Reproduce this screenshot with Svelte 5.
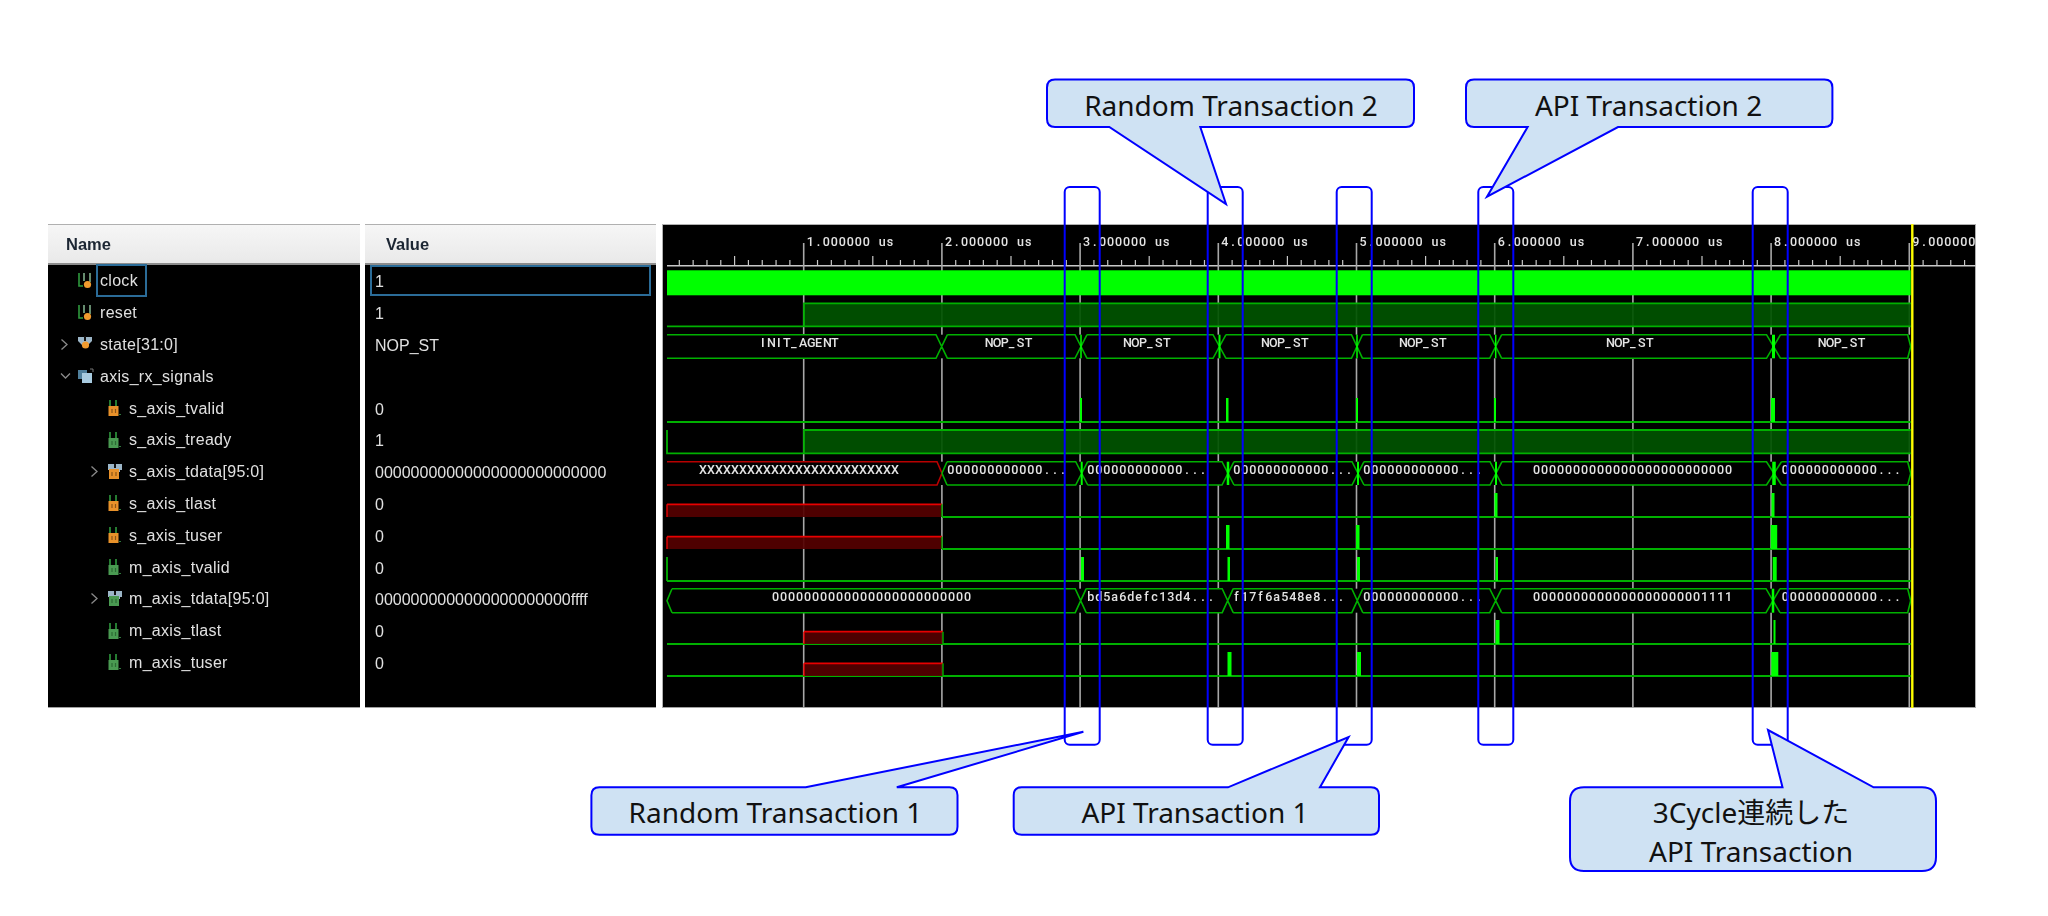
<script>
    // signal tree, top to bottom
    const rows = [
        { name: "clock", value: "1", icon: "wire", sel: true },
        { name: "reset", value: "1", icon: "wire" },
        { name: "state[31:0]", value: "NOP_ST", icon: "bus", open: ">" },
        { name: "axis_rx_signals", value: "", icon: "group", open: "v" },
        { name: "s_axis_tvalid", value: "0", icon: "in", sub: true },
        { name: "s_axis_tready", value: "1", icon: "out", sub: true },
        { name: "s_axis_tdata[95:0]", value: "00000000000000000000000000", icon: "busin", open: ">", sub: true },
        { name: "s_axis_tlast", value: "0", icon: "in", sub: true },
        { name: "s_axis_tuser", value: "0", icon: "in", sub: true },
        { name: "m_axis_tvalid", value: "0", icon: "out", sub: true },
        { name: "m_axis_tdata[95:0]", value: "0000000000000000000000ffff", icon: "busout", open: ">", sub: true },
        { name: "m_axis_tlast", value: "0", icon: "out", sub: true },
        { name: "m_axis_tuser", value: "0", icon: "out", sub: true }
    ];

    const X0 = 665.5;
    const US = 138.2;
    const END = 1910.7;

    const majors = [];
    for (let i = 1; i <= 9; i++) majors.push(X0 + i * US);

    const ticks = [];
    for (let i = 1; i < 95; i++) {
        if (i % 10 !== 0) ticks.push({ x: X0 + i * US / 10, top: i % 5 === 0 ? 256 : 260 });
    }

    const stateX = [
        { c: 941.7, hw: 5.7, t: 0 }, { c: 1081, hw: 6, t: 1.5 }, { c: 1219.5, hw: 6.5, t: 2 },
        { c: 1357, hw: 5.5, t: 1.5 }, { c: 1495.7, hw: 6, t: 1.5 }, { c: 1773.5, hw: 7, t: 3 }
    ];
    const sdataX = [
        { c: 942, hw: 5, t: 0 }, { c: 1081.7, hw: 6, t: 2 }, { c: 1228, hw: 6, t: 2.5 },
        { c: 1358, hw: 6, t: 2 }, { c: 1496, hw: 6, t: 2 }, { c: 1774, hw: 7.5, t: 3.5 }
    ];
    const mdataX = [
        { c: 1080.7, hw: 5.5, t: 0 }, { c: 1227.7, hw: 5.5, t: 0 }, { c: 1357.3, hw: 5.5, t: 0 },
        { c: 1495.7, hw: 6, t: 0 }, { c: 1773, hw: 7, t: 2.5 }
    ];

    function busPath(top, bot, cross, start, pointed) {
        const mid = (top + bot) / 2;
        let d = "";
        let left = start;
        if (pointed) {
            d += `M${start + 5} ${top}L${start} ${mid}L${start + 5} ${bot}`;
            left = start + 5;
        }
        for (const k of cross) {
            d += `M${left} ${top}H${k.c - k.hw}L${k.c + k.hw} ${bot}M${left} ${bot}H${k.c - k.hw}L${k.c + k.hw} ${top}`;
            left = k.c + k.hw;
        }
        d += `M${left} ${top}H${END - 3}L${END} ${mid}L${END - 3} ${bot}H${left}`;
        return d;
    }

    const buses = [
        { top: 334.7, bot: 358.3, cross: stateX, start: 667, pointed: false },
        { top: 461.7, bot: 485, cross: sdataX.slice(1), start: 947, pointed: false },
        { top: 588.7, bot: 612.7, cross: mdataX, start: 667, pointed: true }
    ];

    const labels = [
        { x: 799, y: 346.5, s: "INIT_AGENT", mid: true },
        { x: 1008.7, y: 346.5, s: "NOP_ST", mid: true },
        { x: 1147, y: 346.5, s: "NOP_ST", mid: true },
        { x: 1285, y: 346.5, s: "NOP_ST", mid: true },
        { x: 1423, y: 346.5, s: "NOP_ST", mid: true },
        { x: 1630, y: 346.5, s: "NOP_ST", mid: true },
        { x: 1841.7, y: 346.5, s: "NOP_ST", mid: true },
        { x: 799, y: 473.5, s: "XXXXXXXXXXXXXXXXXXXXXXXXX", mid: true },
        { x: 947.3, y: 473.5, s: "000000000000..." },
        { x: 1087.3, y: 473.5, s: "000000000000..." },
        { x: 1233.3, y: 473.5, s: "000000000000..." },
        { x: 1363.3, y: 473.5, s: "000000000000..." },
        { x: 1533, y: 473.5, s: "0000000000000000000000000" },
        { x: 1781.7, y: 473.5, s: "000000000000..." },
        { x: 872, y: 600.5, s: "0000000000000000000000000", mid: true },
        { x: 1087.3, y: 600.5, s: "bd5a6defc13d4..." },
        { x: 1233.3, y: 600.5, s: "f17f6a548e8..." },
        { x: 1363.3, y: 600.5, s: "000000000000..." },
        { x: 1533, y: 600.5, s: "0000000000000000000001111" },
        { x: 1781.7, y: 600.5, s: "000000000000..." }
    ];

    // the simulator font is a fixed 8px grid
    const nudge = { ".": 2, I: 2, f: 1, t: 1 };
    function gridX(x, s, mid) {
        const start = mid ? x - s.length * 4 : x;
        return [...s].map((ch, i) => start + i * 8 + (nudge[ch] || 0)).join(" ");
    }

    // single bit rows: low line, high level, pulses [x, width]
    const bits = [
        { low: 422, high: 398, from: 667, pulses: [[1080, 2], [1226, 2.5], [1356, 2], [1494, 2], [1771, 4]] },
        { low: 517, high: 493, from: 942, pulses: [[1494.5, 3], [1771.5, 3]] },
        { low: 549, high: 525, from: 942, pulses: [[1226, 3.5], [1356, 3.5], [1770.7, 6.5]] },
        { low: 581, high: 557, from: 667, pulses: [[1081, 3], [1227.5, 2.5], [1357, 3], [1495.5, 2.5], [1772.7, 4]] },
        { low: 644, high: 620, from: 667, pulses: [[1495.5, 4], [1773.5, 2]] },
        { low: 676, high: 652, from: 667, pulses: [[1227.5, 4], [1357, 4], [1771.3, 7]] }
    ];

    const redBars = [
        { x: 667, w: 275, top: 504.3, bot: 517 },
        { x: 667, w: 275, top: 536.7, bot: 549 },
        { x: 804, w: 139, top: 631.7, bot: 644 },
        { x: 804, w: 139, top: 663.3, bot: 676 }
    ];

    const marks = [1064.7, 1207.7, 1336.7, 1478.3, 1752.7];

    const callouts = [
        { d: "M1055 79.5H1406Q1414 79.5 1414 87.5V119Q1414 127 1406 127H1200.3L1226 204L1109.3 127H1055Q1047 127 1047 119V87.5Q1047 79.5 1055 79.5Z", lines: [{ x: 1231, y: 115.5, s: "Random Transaction 2" }] },
        { d: "M1474 79.5H1824.4Q1832.4 79.5 1832.4 87.5V119Q1832.4 127 1824.4 127H1618L1487 196.7L1527.6 127H1474Q1466 127 1466 119V87.5Q1466 79.5 1474 79.5Z", lines: [{ x: 1648.6, y: 115.5, s: "API Transaction 2" }] },
        { d: "M599.4 787.3H805.7L1083.4 731.7L896.8 787.3H949.5Q957.5 787.3 957.5 795.3V826.7Q957.5 834.7 949.5 834.7H599.4Q591.4 834.7 591.4 826.7V795.3Q591.4 787.3 599.4 787.3Z", lines: [{ x: 775.4, y: 823, s: "Random Transaction 1" }] },
        { d: "M1021.7 787.3H1228L1348.6 737L1320 787.3H1371Q1379 787.3 1379 795.3V826.7Q1379 834.7 1371 834.7H1021.7Q1013.7 834.7 1013.7 826.7V795.3Q1013.7 787.3 1021.7 787.3Z", lines: [{ x: 1195, y: 823, s: "API Transaction 1" }] },
        { d: "M1584 787.3H1782.5L1768 730L1873.6 787.3H1922Q1936 787.3 1936 801.3V857Q1936 871 1922 871H1584Q1570 871 1570 857V801.3Q1570 787.3 1584 787.3Z", lines: [{ x: 1751, y: 823, s: "3Cycle連続した" }, { x: 1751, y: 861.5, s: "API Transaction" }] }
    ];
</script>

<div class="page">
    <div class="panel names">
        <div class="head">Name</div>
        {#each rows as r}
            <div class="row" class:sub={r.sub}>
                <span class="twist">
                    {#if r.open === ">"}
                        <svg width="9" height="13" viewBox="0 0 9 13"><path d="M1.5 1.5L7 6.5L1.5 11.5" fill="none" stroke="#8a8a8a" stroke-width="1.3"/></svg>
                    {:else if r.open === "v"}
                        <svg width="11" height="8" viewBox="0 0 11 8"><path d="M1 1.5L5.5 6L10 1.5" fill="none" stroke="#8a8a8a" stroke-width="1.3"/></svg>
                    {/if}
                </span>
                <svg class="icon" width="17" height="18" viewBox="0 0 17 18">
                    {#if r.icon === "wire"}
                        <path d="M2 1V14H6" fill="none" stroke="#2f9a3e" stroke-width="1.6"/>
                        <path d="M7 1V9M13 1V10" fill="none" stroke="#7fae8a" stroke-width="1.6"/>
                        <circle cx="10.5" cy="12.5" r="3.6" fill="#f09a2e"/>
                    {:else if r.icon === "in" || r.icon === "out"}
                        <path d="M3 1V7M9 1V7" fill="none" stroke="#2f9a3e" stroke-width="1.6"/>
                        <rect x="1.5" y="7" width="10" height="10" fill={r.icon === "in" ? "#e8912a" : "#4a9a52"}/>
                        <path d="M5 10V14M8.5 10V14" stroke={r.icon === "in" ? "#8a5518" : "#2c6a34"} stroke-width="1.2"/>
                        <path d="M12 15.5H14" stroke="#2f7a3e" stroke-width="1.2"/>
                    {:else if r.icon === "bus"}
                        <path d="M1 2H15V6L11 10H5L1 6Z" fill="#9cb6c8"/>
                        <path d="M8 1V6" stroke="#111" stroke-width="2"/>
                        <circle cx="8.5" cy="10" r="3.6" fill="#f09a2e"/>
                    {:else if r.icon === "busin" || r.icon === "busout"}
                        <path d="M1 1H15V7H13V9H3V7H1Z" fill="#9cb6c8"/>
                        <path d="M8 1V5" stroke="#111" stroke-width="2"/>
                        <rect x="2" y="6" width="10" height="10" fill={r.icon === "busin" ? "#e8912a" : "#4a9a52"}/>
                        <path d="M5 9V13M9 9V13" stroke={r.icon === "busin" ? "#8a5518" : "#2c6a34"} stroke-width="1.2"/>
                    {:else}
                        <rect x="1" y="3" width="9" height="9" fill="#4f7f9c"/>
                        <rect x="5" y="6" width="10" height="10" fill="#a8cbe0"/>
                        <path d="M13 2H16M16 2V5" stroke="#777" stroke-width="1"/>
                    {/if}
                </svg>
                <span class="label" class:sel={r.sel}>{r.name}</span>
            </div>
        {/each}
    </div>

    <div class="panel values">
        <div class="head">Value</div>
        {#each rows as r}
            <div class="row val">
                <span class="valbox" class:sel={r.sel}>{r.value}</span>
            </div>
        {/each}
    </div>

    <div class="panel wave">
        <svg class="plot" width="1314" height="484" viewBox="662 224 1314 484">
            {#each ticks as t}
                <line x1={t.x} x2={t.x} y1={t.top} y2="265" stroke="#c8c8c8" stroke-width="1.2"/>
            {/each}
            <line x1="667" x2="1976" y1="265.7" y2="265.7" stroke="#c8c8c8" stroke-width="1.6"/>
            {#each majors as x}
                <line x1={x} x2={x} y1="243" y2="708" stroke="#a8a8a8" stroke-width="1.6"/>
            {/each}
            {#each majors as x, i}
                <text class="ruler" x={gridX(x + 3, `${i + 1}.000000${i === 8 ? "" : " us"}`)} y="245.5">{i + 1}.000000{i === 8 ? "" : " us"}</text>
            {/each}

            <rect x="667" y="270.3" width={END - 667} height="25" fill="#00ff00"/>

            <!-- reset and tready are high for most of the run -->
            <rect x="804" y="303.3" width={END - 804} height="23" fill="#005400" fill-opacity="0.92"/>
            <path d={`M667 326.3H804V303.3H${END}M804 326.3H${END}`} fill="none" stroke="#00b000" stroke-width="1.8"/>
            <rect x="804" y="430" width={END - 804} height="23.3" fill="#005400" fill-opacity="0.92"/>
            <path d={`M667 430V453.3H804V430H${END}M804 453.3H${END}`} fill="none" stroke="#00b000" stroke-width="1.8"/>

            {#each bits as b}
                <line x1={b.from} x2={END} y1={b.low} y2={b.low} stroke="#00b000" stroke-width="1.8"/>
                {#each b.pulses as p}
                    <rect x={p[0]} y={b.high} width={p[1]} height={b.low - b.high} fill="#00ff00"/>
                {/each}
            {/each}
            <path d="M667 557V581" stroke="#00b000" stroke-width="1.8"/>

            {#each redBars as r}
                <rect x={r.x} y={r.top} width={r.w} height={r.bot - r.top} fill="#550000" fill-opacity="0.92"/>
                <line x1={r.x} x2={r.x + r.w} y1={r.top} y2={r.top} stroke="#e80000" stroke-width="1.8"/>
                <line x1={r.x} x2={r.x} y1={r.top} y2={r.bot} stroke="#e80000" stroke-width="1.4"/>
                <line x1={r.x + r.w} x2={r.x + r.w} y1={r.top} y2={r.bot} stroke="#00b000" stroke-width="1.4"/>
            {/each}

            <!-- bus rows hide the time grid behind them -->
            <rect x="667" y="334.7" width={END - 667} height="23.6" fill="#000000"/>
            <rect x="667" y="461.7" width={END - 667} height="23.3" fill="#000000"/>
            <rect x="667" y="588.7" width={END - 667} height="24" fill="#000000"/>

            {#each buses as b}
                <path d={busPath(b.top, b.bot, b.cross, b.start, b.pointed)} fill="none" stroke="#00b000" stroke-width="1.6"/>
                {#each b.cross as k}
                    {#if k.t}
                        <rect x={k.c - k.t / 2} y={b.top} width={k.t} height={b.bot - b.top} fill="#00ff00"/>
                    {/if}
                {/each}
            {/each}
            <path d="M667 461.7H937L942 473.3L937 485H667" fill="none" stroke="#b80000" stroke-width="1.6"/>
            <path d="M942 473.3L947 461.7M942 473.3L947 485" fill="none" stroke="#00b000" stroke-width="1.6"/>

            {#each labels as l}
                <text class="busl" x={gridX(l.x, l.s, l.mid)} y={l.y}>{l.s}</text>
            {/each}

            <line x1="1912.3" x2="1912.3" y1="224" y2="708" stroke="#ffff00" stroke-width="2.4"/>
        </svg>
    </div>

    <!-- annotations sit on top of the waveform window -->
    <svg class="notes" width="2048" height="916" viewBox="0 0 2048 916">
        {#each marks as x}
            <rect x={x} y="187" width="35" height="557.7" rx="5" fill="none" stroke="#0000ff" stroke-width="2"/>
        {/each}
        {#each callouts as c}
            <path d={c.d} fill="#cfe2f3" stroke="#0000ff" stroke-width="2" stroke-linejoin="miter"/>
            {#each c.lines as l}
                <text class="note" x={l.x} y={l.y} text-anchor="middle">{l.s}</text>
            {/each}
        {/each}
    </svg>
</div>

<style>
    :global(body) {
        margin: 0;
        background: #ffffff;
    }

    .page {
        position: relative;
        width: 2048px;
        height: 916px;
        box-sizing: border-box;
        padding: 224px 0 0 48px;
        display: flex;
        align-items: flex-start;
        overflow: hidden;
        font-family: "Liberation Sans", Arial, sans-serif;
    }

    .panel {
        height: 484px;
        background: #000000;
        box-sizing: border-box;
        border-top: 1px solid #b0b0b0;
        border-bottom: 1px solid #a0a0a0;
    }

    .names {
        width: 312px;
        margin-right: 5px;
    }

    .values {
        width: 291px;
        margin-right: 6px;
    }

    .wave {
        width: 1314px;
        border-left: 1px solid #b0b0b0;
        border-right: 1px solid #b0b0b0;
    }

    .plot {
        display: block;
        margin: -1px 0 0 -1px;
        filter: blur(0.3px);
    }

    .head {
        height: 40px;
        box-sizing: border-box;
        padding-left: 18px;
        display: flex;
        align-items: center;
        background: linear-gradient(#f6f6f6, #e9e9e9);
        border-bottom: 2px solid #8c8c8c;
        font-size: 16.5px;
        font-weight: 700;
        color: #1c2633;
        filter: blur(0.3px);
    }

    .values .head {
        padding-left: 21px;
    }

    .row {
        height: 31.8px;
        display: flex;
        align-items: center;
        color: #e0e0e0;
        font-size: 16px;
        letter-spacing: 0.3px;
        padding-left: 12px;
        box-sizing: border-box;
        filter: blur(0.35px);
    }

    .row.sub {
        padding-left: 42px;
    }

    .twist {
        width: 17px;
        display: flex;
        align-items: center;
        flex: none;
    }

    .icon {
        flex: none;
        margin-right: 5px;
    }

    .label {
        padding: 0 7px 0 2px;
        line-height: 29px;
        border: 2px solid transparent;
        margin-left: -3px;
    }

    .row.sub .label {
        margin-left: 0;
        padding: 0;
        border: 0;
    }

    .label.sel,
    .valbox.sel {
        border: 2px solid #2b6c98;
    }

    .row.val {
        padding-left: 5px;
        letter-spacing: 0;
    }

    .valbox {
        display: block;
        width: 281px;
        height: 31px;
        line-height: 29px;
        box-sizing: border-box;
        padding-left: 3px;
        border: 2px solid transparent;
    }

    .ruler,
    .busl {
        font-family: Roboto, sans-serif;
        font-size: 12.5px;
        font-weight: 500;
        fill: #e4e4e4;
    }

    .notes {
        position: absolute;
        left: 0;
        top: 0;
        pointer-events: none;
    }

    .note {
        font-family: "Noto Sans", "Noto Sans CJK JP", sans-serif;
        font-size: 28px;
        fill: #111111;
    }
</style>
